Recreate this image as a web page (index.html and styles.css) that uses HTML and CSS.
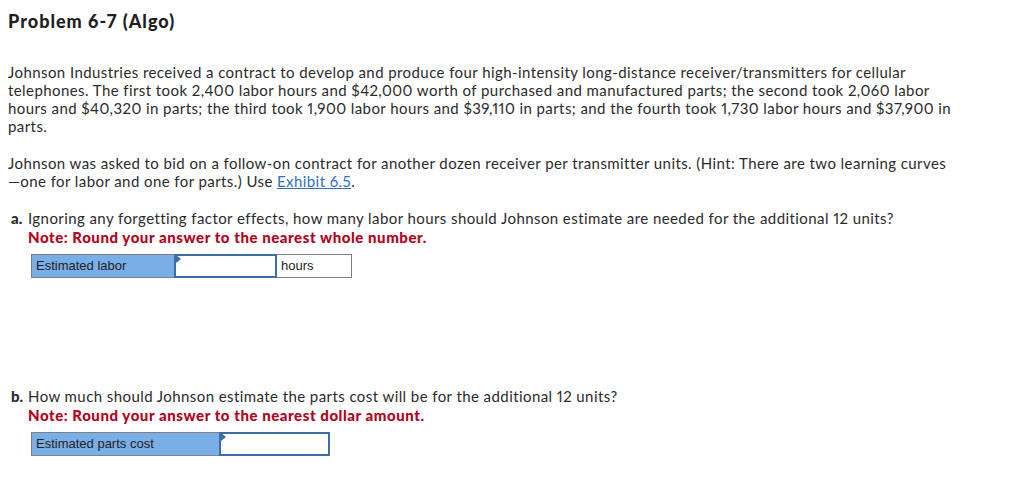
FILE: index.html
```html
<!DOCTYPE html>
<html>
<head>
<meta charset="utf-8">
<link rel="stylesheet" href="styles.css">
</head>
<body>
<div class="page">
  <h1 class="title">Problem 6-7 (Algo)</h1>
  <p class="para first">Johnson Industries received a contract to develop and produce four high-intensity long-distance receiver/transmitters for cellular telephones. The first took 2,400 labor hours and $42,000 worth of purchased and manufactured parts; the second took 2,060 labor hours and $40,320 in parts; the third took 1,900 labor hours and $39,110 in parts; and the fourth took 1,730 labor hours and $37,900 in parts.</p>
  <p class="para second">Johnson was asked to bid on a follow-on contract for another dozen receiver per transmitter units. (Hint: There are two learning curves —one for labor and one for parts.) Use <a class="link" href="#">Exhibit 6.5</a>.</p>

  <div class="question qa">
    <div class="qline"><span class="qlabel">a.</span><span class="qtext">Ignoring any forgetting factor effects, how many labor hours should Johnson estimate are needed for the additional 12 units?</span></div>
    <div class="note">Note: Round your answer to the nearest whole number.</div>
    <div class="answer">
      <div class="cell label label-a">Estimated labor</div>
      <div class="cell input input-a"><span class="flag"></span></div>
      <div class="cell unit">hours</div>
    </div>
  </div>

  <div class="question qb">
    <div class="qline"><span class="qlabel">b.</span><span class="qtext">How much should Johnson estimate the parts cost will be for the additional 12 units?</span></div>
    <div class="note">Note: Round your answer to the nearest dollar amount.</div>
    <div class="answer">
      <div class="cell label label-b">Estimated parts cost</div>
      <div class="cell input input-b"><span class="flag"></span></div>
    </div>
  </div>
</div>
</body>
</html>
```

FILE: styles.css
```css
html, body {
  margin: 0;
  padding: 0;
  background: #ffffff;
}
body {
  font-family: Lato, "Open Sans", sans-serif;
  font-variant-numeric: proportional-nums;
  color: #2b2b2b;
}
.page {
  padding: 8px 8px 0 8px;
  width: 945px;
}
.title {
  margin: 3px 0 0 0;
  font-size: 18px;
  font-weight: 900;
  letter-spacing: 1px;
  line-height: 20px;
  color: #1f1f1f;
}
.para {
  font-size: 15px;
  line-height: 18px;
  letter-spacing: 0.42px;
  margin: 0;
}
.first {
  margin-top: 32px;
}
.second {
  margin-top: 19px;
}
.link {
  color: #2f6fc8;
  text-decoration: underline;
}
.question {
  padding-left: 3px;
}
.qa {
  margin-top: 19px;
}
.qb {
  margin-top: 109px;
}
.qline {
  display: flex;
  font-size: 15px;
  line-height: 18px;
  letter-spacing: 0.42px;
}
.qlabel {
  font-weight: 900;
  width: 17px;
  flex: none;
  letter-spacing: 0;
}
.note {
  margin-left: 17px;
  margin-top: 1px;
  font-size: 15px;
  line-height: 18px;
  font-weight: 900;
  letter-spacing: 0.56px;
  color: #b3001b;
}
.answer {
  display: flex;
  margin-left: 20px;
  margin-top: 8px;
  height: 24px;
  font-family: "Liberation Sans", Arial, sans-serif;
  font-size: 13px;
  color: #222;
}
.cell {
  box-sizing: border-box;
  height: 24px;
  line-height: 22px;
  padding-left: 4px;
}
.label {
  background: #7aaee6;
  border: 1px solid #808080;
  border-right: none;
}
.label-a { width: 143px; }
.label-b { width: 188px; }
.input {
  position: relative;
  background: #fff;
  border: 2px solid #3a6ea5;
}
.input-a { width: 103px; }
.input-b { width: 111px; }
.flag {
  position: absolute;
  left: 0;
  top: -1px;
  width: 0;
  height: 0;
  border-top: 4px solid transparent;
  border-bottom: 4px solid transparent;
  border-left: 5px solid #3a6ea5;
}
.unit {
  width: 75px;
  border: 1px solid #808080;
  border-left: none;
  padding-left: 4px;
}
```
